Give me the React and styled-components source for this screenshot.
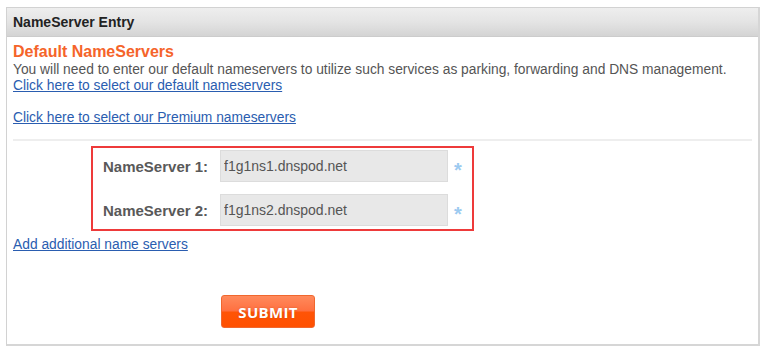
import React from 'react';
import styled, {createGlobalStyle} from 'styled-components';

const GlobalStyle = createGlobalStyle`
  html, body {
    margin: 0;
    padding: 0;
    background: #ffffff;
  }
  body {
    font-family: "Liberation Sans", Arial, sans-serif;
  }
`

const servers = [
  {label: 'NameServer 1:', value: 'f1g1ns1.dnspod.net'},
  {label: 'NameServer 2:', value: 'f1g1ns2.dnspod.net'}
]

export default function App() {
  return (
    <Page>
      <GlobalStyle />
      <Panel>
        <Header>NameServer Entry</Header>
        <Body>
          <Title>Default NameServers</Title>
          <Text>You will need to enter our default nameservers to utilize such services as parking, forwarding and DNS management.</Text>
          <TextLink href="#">Click here to select our default nameservers</TextLink>
          <TextLink href="#" $gap>Click here to select our Premium nameservers</TextLink>
          <Divider />
          <ServerBox>
            {servers.map(s => (
              <ServerRow key={s.label}>
                <Label>{s.label}</Label>
                <Input defaultValue={s.value} />
                <Required>*</Required>
              </ServerRow>
            ))}
          </ServerBox>
          <TextLink href="#">Add additional name servers</TextLink>
          <ButtonRow>
            <SubmitButton>SUBMIT</SubmitButton>
          </ButtonRow>
        </Body>
      </Panel>
    </Page>
  )
}

const Page = styled.div`
  padding: 7px 8px 0 6px;
  width: 768px;
  box-sizing: border-box;
`

const Panel = styled.section`
  width: 754px;
  height: 339px;
  box-sizing: border-box;
  border: 1px solid #d2d2d2;
  border-right: 2px solid #d6d6d6;
  border-bottom: 2px solid #d6d6d6;
  background: #fff;
`

const Header = styled.div`
  height: 29px;
  box-sizing: border-box;
  padding: 6px 0 0 6px;
  background: linear-gradient(to bottom, #eeeeee 0%, #e4e4e4 50%, #d4d4d4 100%);
  border-bottom: 1px solid #cccccc;
  font-size: 14px;
  font-weight: bold;
  color: #222;
`

const Body = styled.div`
  padding: 5px 6px 0 6px;
  display: flex;
  flex-direction: column;
  align-items: flex-start;
`

const Title = styled.h2`
  margin: 0;
  font-size: 16px;
  line-height: 20px;
  font-weight: bold;
  color: #f5642a;
`

const Text = styled.p`
  margin: 0;
  font-size: 13.8px;
  line-height: 16px;
  color: #555;
`

const TextLink = styled.a`
  margin-top: ${p => (p.$gap ? '16px' : '0')};
  font-size: 13.8px;
  line-height: 16px;
  color: #2a5db0;
  text-decoration: underline;
`

const Divider = styled.div`
  align-self: stretch;
  height: 2px;
  background: #eeeeee;
  margin: 13px 0 5px 0;
`

const ServerBox = styled.div`
  margin-left: 78px;
  width: 383px;
  box-sizing: border-box;
  border: 2px solid #ee3a3a;
  padding: 2px 0 3px 10px;
  display: flex;
  flex-direction: column;
  gap: 12px;
  margin-bottom: 6px;
`

const ServerRow = styled.div`
  display: flex;
  align-items: center;
`

const Label = styled.label`
  width: 117px;
  font-size: 15px;
  font-weight: bold;
  color: #595959;
`

const Input = styled.input`
  width: 228px;
  height: 32px;
  box-sizing: border-box;
  border: 1px solid #dcdcdc;
  background: #e8e8e8;
  padding: 0 3px;
  font-family: "Liberation Sans", Arial, sans-serif;
  font-size: 14px;
  color: #555;
  outline: none;
`

const Required = styled.span`
  margin-left: 6px;
  font-size: 20px;
  line-height: 20px;
  padding-top: 7px;
  font-weight: bold;
  color: #9ccaf0;
`

const ButtonRow = styled.div`
  padding: 42px 0 0 208px;
`

const SubmitButton = styled.button`
  width: 94px;
  height: 33px;
  border: 1px solid #f0672e;
  border-radius: 3px;
  background: linear-gradient(to bottom, #ff8a5c 0%, #ff7040 48%, #ff5406 52%, #ff5000 100%);
  color: #fff;
  font-family: "Open Sans", "DejaVu Sans", sans-serif;
  font-size: 15px;
  font-weight: bold;
  letter-spacing: 0.3px;
  text-shadow: 0 0 2px rgba(150, 50, 0, 0.4);
  cursor: pointer;
`
